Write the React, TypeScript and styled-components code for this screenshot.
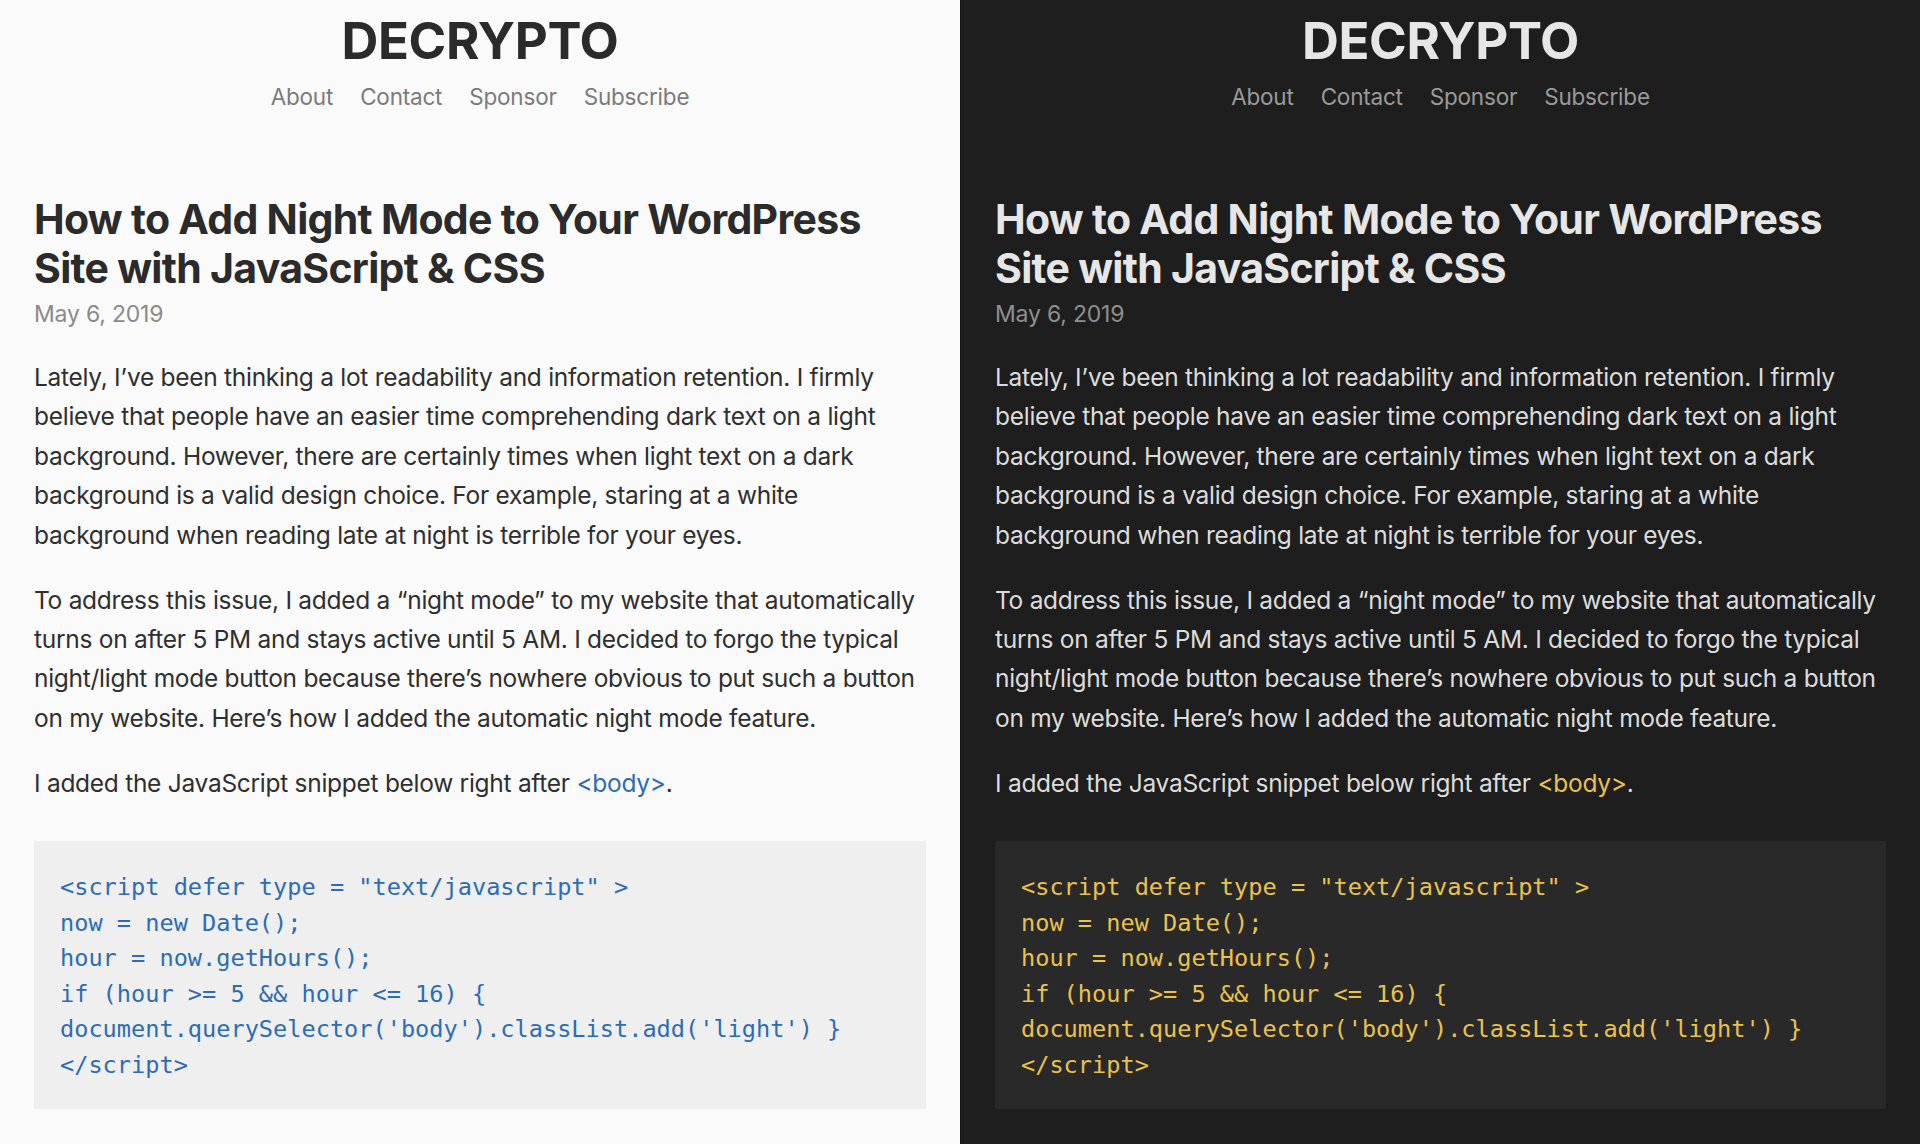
import React, { FC } from 'react';
import styled, { createGlobalStyle, ThemeProvider } from 'styled-components';

type Theme = {
  bg: string;
  heading: string;
  text: string;
  muted: string;
  nav: string;
  accent: string;
  codeBg: string;
};

const light: Theme = {
  bg: '#fafafa',
  heading: '#2b2b2b',
  text: '#2f2f2f',
  muted: '#8a8a8a',
  nav: '#7b7b7b',
  accent: '#2c6cb6',
  codeBg: '#efefef',
};

const dark: Theme = {
  bg: '#1e1e1e',
  heading: '#e6e6e6',
  text: '#dcdcdc',
  muted: '#8f8f8f',
  nav: '#9a9a9a',
  accent: '#e9c24c',
  codeBg: '#292929',
};

const GlobalStyle = createGlobalStyle`
  html, body {
    margin: 0;
    padding: 0;
    background: #1e1e1e;
  }
  body {
    font-family: Inter, "Liberation Sans", sans-serif;
    -webkit-font-smoothing: antialiased;
  }
`;

const Split = styled.div`
  display: grid;
  grid-template-columns: 960px 960px;
  width: 1920px;
  height: 1144px;
  overflow: hidden;
`;

const Panel = styled.main`
  background: ${p => p.theme.bg};
  padding: 10px 34px 0;
  box-sizing: border-box;
  height: 100%;
  & + & {
    border-left: 1px solid #161616;
  }
`;

const Header = styled.header`
  display: flex;
  flex-direction: column;
  align-items: center;
`;

const SiteTitle = styled.h1`
  margin: 0;
  font-size: 51px;
  line-height: 62px;
  font-weight: 700;
  letter-spacing: -0.3px;
  color: ${p => p.theme.heading};
`;

const Nav = styled.nav`
  display: flex;
  gap: 27px;
  margin-top: 10px;
`;

const NavLink = styled.a`
  font-size: 22.5px;
  line-height: 30px;
  color: ${p => p.theme.nav};
  text-decoration: none;
  letter-spacing: -0.2px;
`;

const Article = styled.article`
  margin-top: 83px;
`;

const PostTitle = styled.h2`
  margin: 0;
  font-size: 41px;
  line-height: 49px;
  font-weight: 700;
  letter-spacing: -0.7px;
  color: ${p => p.theme.heading};
`;

const PostDate = styled.div`
  margin-top: 6px;
  font-size: 23px;
  line-height: 30px;
  color: ${p => p.theme.muted};
  letter-spacing: -0.2px;
`;

const Body = styled.div`
  margin-top: 29px;
`;

const Para = styled.p`
  margin: 0 0 25.5px;
  font-size: 24.5px;
  line-height: 39.4px;
  letter-spacing: -0.28px;
  color: ${p => p.theme.text};
`;

const Accent = styled.span`
  color: ${p => p.theme.accent};
`;

const CodeBlock = styled.pre`
  margin: 38px 0 0;
  padding: 29px 26px 25px;
  background: ${p => p.theme.codeBg};
  font-family: "DejaVu Sans Mono", "Liberation Mono", monospace;
  font-size: 23.6px;
  line-height: 35.6px;
  color: ${p => p.theme.accent};
  white-space: pre;
`;

const code = `<script defer type = "text/javascript" >
now = new Date();
hour = now.getHours();
if (hour >= 5 && hour <= 16) {
document.querySelector('body').classList.add('light') }
</script>`;

const navItems = ['About', 'Contact', 'Sponsor', 'Subscribe'];

const Page: FC<{ theme: Theme }> = ({ theme }) => (
  <ThemeProvider theme={theme}>
    <Panel>
      <Header>
        <SiteTitle>DECRYPTO</SiteTitle>
        <Nav>
          {navItems.map(item => (
            <NavLink key={item} href="#">{item}</NavLink>
          ))}
        </Nav>
      </Header>
      <Article>
        <PostTitle>How to Add Night Mode to Your WordPress Site with JavaScript &amp; CSS</PostTitle>
        <PostDate>May 6, 2019</PostDate>
        <Body>
          <Para>
            Lately, I’ve been thinking a lot readability and information retention. I firmly
            believe that people have an easier time comprehending dark text on a light
            background. However, there are certainly times when light text on a dark
            background is a valid design choice. For example, staring at a white
            background when reading late at night is terrible for your eyes.
          </Para>
          <Para>
            To address this issue, I added a “night mode” to my website that automatically
            turns on after 5 PM and stays active until 5 AM. I decided to forgo the typical
            night/light mode button because there’s nowhere obvious to put such a button
            on my website. Here’s how I added the automatic night mode feature.
          </Para>
          <Para>
            I added the JavaScript snippet below right after <Accent>&lt;body&gt;</Accent>.
          </Para>
        </Body>
        <CodeBlock>{code}</CodeBlock>
      </Article>
    </Panel>
  </ThemeProvider>
);

const App: FC = () => (
  <>
    <GlobalStyle />
    <Split>
      <Page theme={light} />
      <Page theme={dark} />
    </Split>
  </>
);

export default App;
